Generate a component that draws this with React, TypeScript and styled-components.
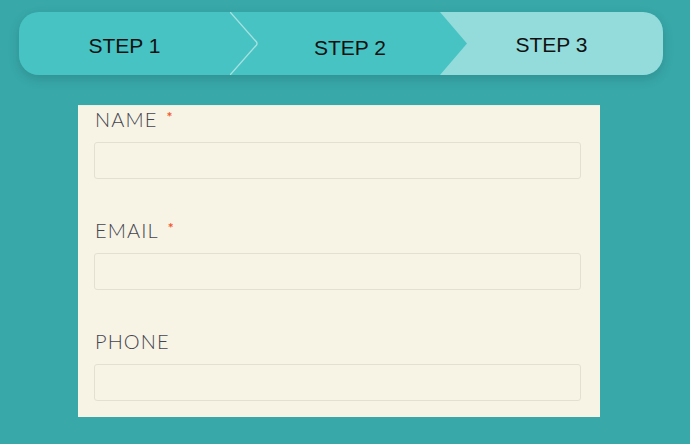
import React from "react";
import styled, { createGlobalStyle } from "styled-components";

const GlobalStyle = createGlobalStyle`
  * { box-sizing: border-box; }
  body {
    margin: 0;
    background: #38a8a9;
    font-family: "Liberation Sans", Arial, sans-serif;
  }
`;

const Page = styled.div`
  width: 690px;
  height: 444px;
  padding: 12px 27px 0 19px;
  overflow: hidden;
`;

const StepBar = styled.ol`
  display: flex;
  margin: 0;
  padding: 0;
  list-style: none;
  height: 63px;
  border-radius: 20px;
  overflow: hidden;
  box-shadow: 0 4px 12px rgba(0, 0, 0, 0.14);
`;

const Step = styled.li<{ $width: number; $light?: boolean; $arrow?: boolean; $top: number; $left?: number }>`
  position: relative;
  width: ${(p) => p.$width}px;
  flex: none;
  display: flex;
  align-items: center;
  justify-content: center;
  padding-top: ${(p) => p.$top}px;
  padding-left: ${(p) => p.$left ?? 0}px;
  background: ${(p) => (p.$light ? "#94dcdc" : "#47c3c3")};
  color: #111;
  font-size: 21px;

  ${(p) =>
    p.$arrow &&
    `
    &::after {
      content: "";
      position: absolute;
      top: 0;
      left: 100%;
      width: 27px;
      height: 100%;
      background: #47c3c3;
      clip-path: polygon(0 0, 100% 50%, 0 100%);
      z-index: 1;
    }
  `}
`;

const Divider = styled.svg`
  position: absolute;
  top: 0;
  left: 100%;
  width: 30px;
  height: 63px;
  z-index: 2;
`;

const Card = styled.form`
  width: 522px;
  margin: 30px 0 0 59px;
  padding: 1px 19px 16px 16px;
  background: #f7f4e6;
  border-top: 1px solid #e9efe4;
  display: flex;
  flex-direction: column;
  gap: 39px;
`;

const Field = styled.div`
  display: flex;
  flex-direction: column;
  gap: 11px;
`;

const Label = styled.label`
  font-family: Lato, "Open Sans", sans-serif;
  font-weight: 300;
  font-size: 20px;
  line-height: 24px;
  letter-spacing: 1.1px;
  color: #45454f;
  padding-left: 1px;
`;

const Required = styled.span`
  color: #f2572b;
  font-size: 14px;
  font-weight: 700;
  line-height: 0;
  vertical-align: 5px;
  margin-left: 9px;
`;

const Input = styled.input`
  display: block;
  height: 37px;
  width: 100%;
  border: 1px solid #e4e0d1;
  border-radius: 3px;
  background: #f7f4e6;
  outline: none;
`;

const fields = [
  { label: "NAME", required: true },
  { label: "EMAIL", required: true },
  { label: "PHONE", required: false },
];

export default function App() {
  return (
    <Page>
      <GlobalStyle />
      <StepBar>
        <Step $width={211} $top={5}>
          STEP 1
          <Divider viewBox="0 0 30 63">
            <path
              d="M0 0 L26.5 30 Q27.5 31.5 26.5 33 L0 63"
              fill="none"
              stroke="rgba(255,255,255,0.5)"
              strokeWidth="1.4"
            />
          </Divider>
        </Step>
        <Step $width={210} $top={9} $left={30} $arrow>
          STEP 2
        </Step>
        <Step $width={223} $top={3} $light>
          STEP 3
        </Step>
      </StepBar>
      <Card>
        {fields.map((f) => (
          <Field key={f.label}>
            <Label>
              {f.label}
              {f.required && <Required>*</Required>}
            </Label>
            <Input type="text" />
          </Field>
        ))}
      </Card>
    </Page>
  );
}
